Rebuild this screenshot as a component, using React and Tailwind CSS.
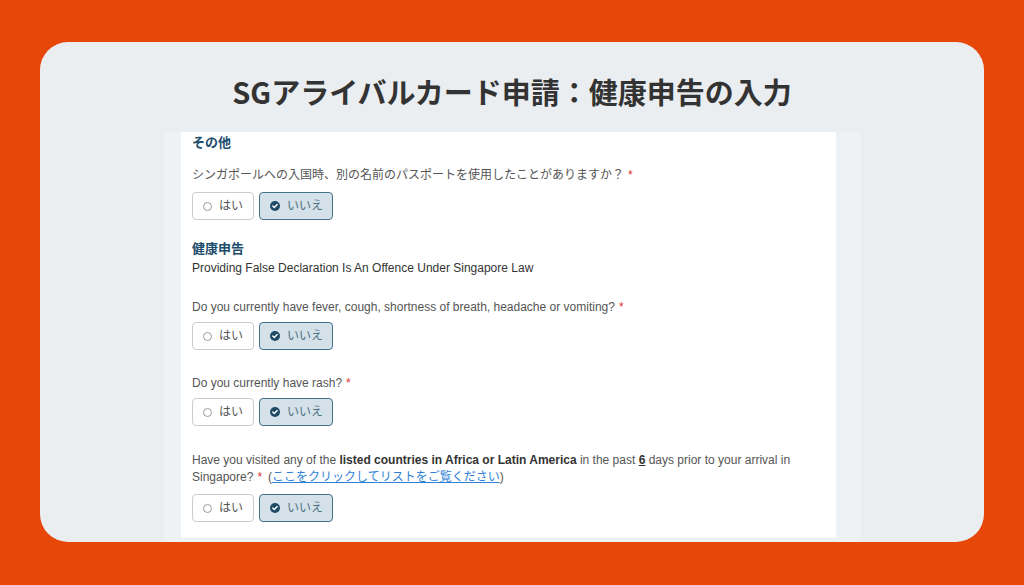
import React from 'react';

const jp = { fontFamily: '"Liberation Sans", "Noto Sans CJK JP", sans-serif' };

const Choice = () => (
  <div className="flex gap-[5px]">
    <div className="flex items-center h-[28px] pl-[10px] pr-[10px] gap-[7px] border border-[#c9cdd0] rounded-[4px] bg-white text-[12px] text-[#555]">
      <span className="w-[9px] h-[9px] rounded-full border border-[#9a9a9a]" />
      <span>はい</span>
    </div>
    <div className="flex items-center h-[28px] pl-[10px] pr-[9px] gap-[7px] border border-[#45718b] rounded-[4px] bg-[#d4e1e8] text-[12px] text-[#4d6f83]">
      <svg width="10" height="10" viewBox="0 0 10 10">
        <circle cx="5" cy="5" r="5" fill="#1f4a66" />
        <path d="M2.8 5.1 L4.3 6.6 L7.2 3.6" stroke="white" strokeWidth="1.4" fill="none" strokeLinecap="round" strokeLinejoin="round" />
      </svg>
      <span>いいえ</span>
    </div>
  </div>
);

const Req = () => <span className="text-[#e0302b] ml-[4px]">*</span>;

const App = () => {
  return (
    <div className="w-[1024px] h-[585px] bg-[#e8470a] pt-[42px] pl-[40px]" style={jp}>
      <div className="w-[944px] h-[500px] bg-[#eaeef1] rounded-[28px] overflow-hidden flex flex-col">
        <div
          className="pt-[29px] h-[69px] text-center text-[29px] leading-[40px] font-bold text-[#333]"
          style={{ fontFamily: '"Noto Sans CJK JP", sans-serif' }}
        >
          SGアライバルカード申請：健康申告の入力
        </div>
        <div className="mt-[21px] ml-[124px] w-[697px] flex-1 bg-[#eef2f5] flex">
          <div className="w-[17px]" />
          <div className="w-[655px] h-[406px] bg-white pl-[11px] pr-[16px] pt-[2px] text-[12px] text-[#555]">
            <div className="h-[18px] leading-[18px] text-[13px] font-bold text-[#1d4d6c]">その他</div>
            <div className="mt-[15px] leading-[17px]">
              シンガポールへの入国時、別の名前のパスポートを使用したことがありますか？<Req />
            </div>
            <div className="mt-[8px]">
              <Choice />
            </div>

            <div className="mt-[20px] h-[18px] leading-[18px] text-[13px] font-bold text-[#1d4d6c]">健康申告</div>
            <div className="mt-[2px] leading-[17px] text-[#333]">
              Providing False Declaration Is An Offence Under Singapore Law
            </div>

            <div className="mt-[22px] leading-[17px]">
              Do you currently have fever, cough, shortness of breath, headache or vomiting?<Req />
            </div>
            <div className="mt-[6px]">
              <Choice />
            </div>

            <div className="mt-[25px] leading-[17px]">
              Do you currently have rash?<Req />
            </div>
            <div className="mt-[6px]">
              <Choice />
            </div>

            <div className="mt-[26px] leading-[17px]">
              Have you visited any of the <b className="text-[#333]">listed countries in Africa or Latin America</b> in the past{' '}
              <b className="underline text-[#333]">6</b> days prior to your arrival in Singapore?<Req />
              <span className="ml-[6px]">
                (<span className="text-[#2f7fd6] underline">ここをクリックしてリストをご覧ください</span>)
              </span>
            </div>
            <div className="mt-[8px]">
              <Choice />
            </div>
          </div>
        </div>
      </div>
    </div>
  );
};

export default App;
